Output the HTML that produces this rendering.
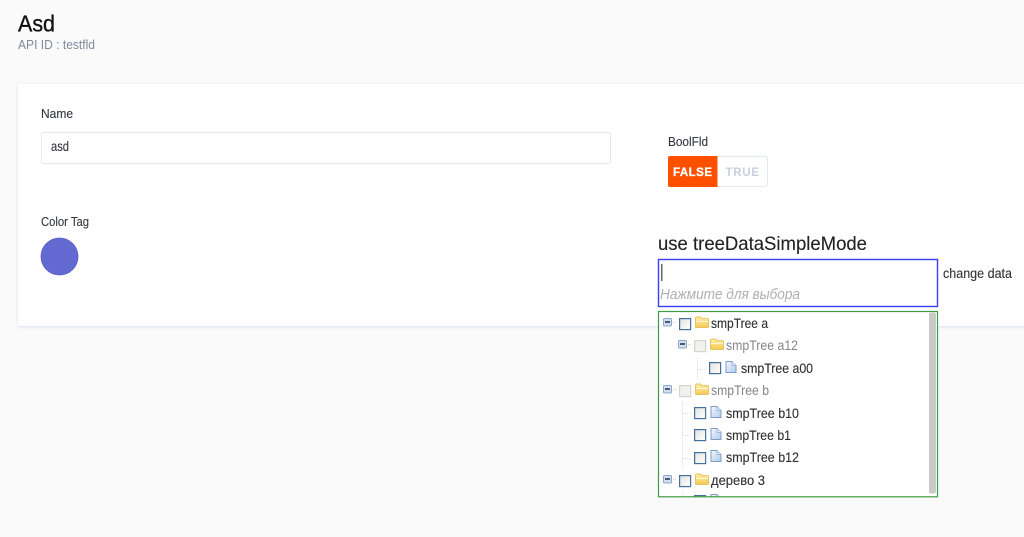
<!DOCTYPE html>
<html lang="en">
<head>
<meta charset="utf-8">
<title>Asd</title>
<style>
html,body{margin:0;padding:0;width:1024px;height:537px;overflow:hidden;background:#fafafb}
svg{display:block;position:absolute;left:0;top:0}
text{font-family:"Liberation Sans",sans-serif;fill:#333740}
.tr{font-size:14px;fill:#2f2f2f;stroke:#2f2f2f;stroke-width:.12px}
.off{font-size:14px;fill:#858585;stroke:none}
</style>
</head>
<body>
<svg width="1024" height="537" viewBox="0 0 1024 537" xmlns="http://www.w3.org/2000/svg">
<defs>
<linearGradient id="fg" x1="0" y1="0" x2="0" y2="1"><stop offset="0" stop-color="#ffeea8"/><stop offset="1" stop-color="#f3c957"/></linearGradient>
<linearGradient id="pg" x1="0" y1="0" x2="1" y2="1"><stop offset="0" stop-color="#f4f8fd"/><stop offset="1" stop-color="#aecbee"/></linearGradient>
<linearGradient id="cg" x1="0" y1="0" x2="1" y2="1"><stop offset="0" stop-color="#e2e2de"/><stop offset="1" stop-color="#ffffff"/></linearGradient>
<g id="folder">
<path d="M0.5 3 Q0.5 1 2 1 L5.5 1 L7 2.6 L12.5 2.6 Q13.5 2.6 13.5 4 L13.5 10.5 Q13.5 11.5 12.5 11.5 L1.5 11.5 Q0.5 11.5 0.5 10.5 Z" fill="url(#fg)" stroke="#e8c25c"/>
<path d="M1 5.5 L13 5.5" stroke="#fff8d8" fill="none"/>
</g>
<g id="file">
<path d="M0.5 0.5 L6.5 0.5 L10.5 4.5 L10.5 11.5 L0.5 11.5 Z" fill="url(#pg)" stroke="#7f9cc8"/>
<path d="M6.5 0.5 L6.5 4.5 L10.5 4.5" fill="#e4eefa" stroke="#9fb8da"/>
</g>
<g id="check"><rect x="0.6" y="0.6" width="11" height="11" fill="url(#cg)" stroke="#44709f" stroke-width="1.2"/></g>
<g id="checkoff"><rect x="0.6" y="0.6" width="11" height="11" fill="#f1f1ee" stroke="#d4d4ce" stroke-width="1.2"/></g>
<g id="minus">
<rect x="0.5" y="0.5" width="8" height="7.5" rx="1" fill="#d2deee" stroke="#8fa8ca"/>
<rect x="2" y="3.2" width="5" height="1.6" fill="#2a3950"/>
<path d="M10 4.5 h1 m1 0 h1" stroke="#d5d5d5" stroke-width="1"/>
</g>
<g id="conn"><path d="M0.5 0 V22" stroke="#dcdcdc" stroke-dasharray="1 1" fill="none"/><path d="M1 11.5 H8" stroke="#dcdcdc" stroke-dasharray="1 1" fill="none"/></g>
<clipPath id="treeclip"><rect x="659" y="312" width="278" height="185"/></clipPath>
<filter id="sh" x="-5%" y="-5%" width="110%" height="110%"><feDropShadow dx="0" dy="1" stdDeviation="1.5" flood-color="#d3ddf2" flood-opacity="0.9"/></filter>
</defs>

<!-- Header -->
<text x="18" y="31.5" font-size="23" textLength="37" lengthAdjust="spacingAndGlyphs" style="fill:#111;stroke:#111;stroke-width:.35px">Asd</text>
<text x="18" y="49" font-size="13" textLength="77" lengthAdjust="spacingAndGlyphs" style="fill:#7f8b9c">API ID : testfld</text>

<!-- Card -->
<rect x="18" y="84" width="1020" height="242" rx="2" fill="#fff" filter="url(#sh)"/>

<text x="41" y="118" font-size="13" textLength="32" lengthAdjust="spacingAndGlyphs" style="stroke:#333740;stroke-width:.12px">Name</text>
<rect x="41.5" y="132.5" width="569" height="31" rx="2" fill="#fff" stroke="#e3e9f3"/>
<text x="51" y="151" font-size="14" textLength="18" lengthAdjust="spacingAndGlyphs" style="stroke:#333740;stroke-width:.12px">asd</text>

<text x="668" y="146" font-size="13" textLength="40" lengthAdjust="spacingAndGlyphs" style="stroke:#333740;stroke-width:.12px">BoolFld</text>
<rect x="668.5" y="156.5" width="99" height="30" rx="2" fill="#fff" stroke="#e3e9f3"/>
<path d="M670 156 H717.5 V187 H670 Q668 187 668 185 V158 Q668 156 670 156 Z" fill="#ff5000"/>
<text x="673" y="176" font-size="11.5" font-weight="700" textLength="39" style="fill:#fff;stroke:#fff;stroke-width:.3px">FALSE</text>
<text x="725.5" y="176" font-size="11.5" font-weight="700" textLength="33.5" style="fill:#c9d0de">TRUE</text>

<text x="41" y="226" font-size="13" textLength="48" lengthAdjust="spacingAndGlyphs" style="stroke:#333740;stroke-width:.12px">Color Tag</text>
<circle cx="59.5" cy="256.5" r="18.5" fill="#6269d0" stroke="#5a61cc" stroke-width=".8"/>

<!-- Tree widget -->
<text x="658" y="250" font-size="19.5" textLength="209" lengthAdjust="spacingAndGlyphs" style="fill:#222;stroke:#222;stroke-width:.12px">use treeDataSimpleMode</text>
<rect x="658.5" y="259.5" width="279" height="47" fill="#fff" stroke="#3c3cf5" stroke-width="1.4"/>
<rect x="661" y="264" width="1.5" height="17" fill="#666"/>
<text x="660" y="299" font-size="14.5" font-style="italic" textLength="140" lengthAdjust="spacingAndGlyphs" style="fill:#b0b0b0">Нажмите для выбора</text>
<text x="943" y="278" font-size="14" textLength="69" lengthAdjust="spacingAndGlyphs" style="fill:#333;stroke:#333;stroke-width:.12px">change data</text>

<rect x="658.5" y="311.5" width="279" height="185" fill="#fff"/>
<g clip-path="url(#treeclip)">
<!-- row 1 -->
<use href="#minus" x="663" y="318"/>
<use href="#check" x="679" y="318"/>
<use href="#folder" x="695" y="316"/>
<text x="711" y="328" class="tr" textLength="57" lengthAdjust="spacingAndGlyphs">smpTree a</text>
<!-- row 2 -->
<use href="#minus" x="678" y="340"/>
<use href="#checkoff" x="694" y="340"/>
<use href="#folder" x="710" y="338"/>
<text x="726" y="350" class="off" textLength="72" lengthAdjust="spacingAndGlyphs">smpTree a12</text>
<!-- row 3 -->
<use href="#conn" x="697" y="358"/>
<use href="#check" x="709" y="362"/>
<use href="#file" x="725.5" y="361"/>
<text x="741" y="373" class="tr" textLength="72" lengthAdjust="spacingAndGlyphs">smpTree a00</text>
<!-- row 4 -->
<use href="#minus" x="663" y="385"/>
<use href="#checkoff" x="679" y="385"/>
<use href="#folder" x="695" y="383"/>
<text x="711" y="395" class="off" textLength="58" lengthAdjust="spacingAndGlyphs">smpTree b</text>
<!-- row 5 -->
<use href="#conn" x="682" y="402"/>
<use href="#check" x="694" y="407"/>
<use href="#file" x="710.5" y="406"/>
<text x="726" y="418" class="tr" textLength="73" lengthAdjust="spacingAndGlyphs">smpTree b10</text>
<!-- row 6 -->
<use href="#conn" x="682" y="424"/>
<use href="#check" x="694" y="429"/>
<use href="#file" x="710.5" y="428"/>
<text x="726" y="440" class="tr" textLength="65" lengthAdjust="spacingAndGlyphs">smpTree b1</text>
<!-- row 7 -->
<use href="#conn" x="682" y="447"/>
<use href="#check" x="694" y="452"/>
<use href="#file" x="710.5" y="450"/>
<text x="726" y="462" class="tr" textLength="73" lengthAdjust="spacingAndGlyphs">smpTree b12</text>
<!-- row 8 -->
<use href="#minus" x="663" y="475"/>
<use href="#check" x="679" y="475"/>
<use href="#folder" x="695" y="473"/>
<text x="711" y="485" class="tr" textLength="54" lengthAdjust="spacingAndGlyphs">дерево 3</text>
<!-- row 9 clipped -->
<use href="#conn" x="682" y="492"/>
<use href="#check" x="694" y="495"/>
<use href="#file" x="710.5" y="494"/>
</g>
<rect x="658.5" y="311.5" width="279" height="185.3" fill="none" stroke="#3f9b3f" stroke-width="1.2"/>
<!-- scrollbar -->
<rect x="929" y="312.5" width="7" height="181" rx="2" fill="#c9c9c9"/>
</svg>
</body>
</html>
